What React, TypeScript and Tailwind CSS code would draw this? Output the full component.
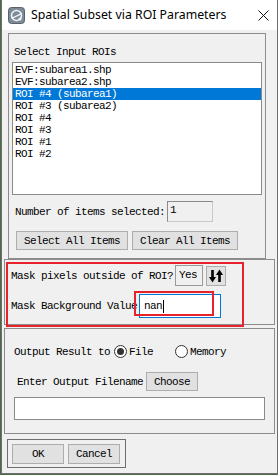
import { memo } from "react";

const mono = "font-['Liberation_Mono',monospace] text-[11px] tracking-[-0.6px] leading-[12px] text-black";
const btn = "flex items-center justify-center bg-[#e1e1e1] border border-[#adadad] " + mono;

const rois = [
  "EVF:subarea1.shp",
  "EVF:subarea2.shp",
  "ROI #4 (subarea1)",
  "ROI #3 (subarea2)",
  "ROI #4",
  "ROI #3",
  "ROI #1",
  "ROI #2",
];

const AppIcon = () => (
  <svg width="17" height="17" viewBox="0 0 17 17">
    <rect x="0.5" y="0.5" width="16" height="16" rx="3" fill="#7d8b99" stroke="#56626e" />
    <circle cx="8.5" cy="8.5" r="5" fill="none" stroke="#eef2f5" strokeWidth="1.6" />
    <path d="M4 11.5 C7 9 11 9 13.5 6" fill="none" stroke="#eef2f5" strokeWidth="1.3" />
    <circle cx="12" cy="12" r="1.6" fill="#eef2f5" />
  </svg>
);

const SwapIcon = () => (
  <svg width="14" height="14" viewBox="0 0 14 14">
    <rect x="2.2" y="1" width="2.6" height="8" fill="#000" />
    <polygon points="0,8 7,8 3.5,13.5" fill="#000" />
    <polygon points="7,6 14,6 10.5,0.5" fill="#000" />
    <rect x="9.2" y="5" width="2.6" height="8" fill="#000" />
  </svg>
);

const Radio = ({ on }: { on?: boolean }) => (
  <span className="w-[13px] h-[13px] rounded-full border border-[#333] bg-white flex items-center justify-center">
    {on && <span className="w-[7px] h-[7px] rounded-full bg-[#333]" />}
  </span>
);

export default memo(function App() {
  return (
    <div className="relative w-[278px] h-[475px] bg-[#4f6b45] overflow-hidden">
      <div className="ml-px w-[277px] h-[474px] bg-[#f0f0f0] border-x border-b border-[#6e6e6e] flex flex-col">
        {/* title bar */}
        <div className="h-[30px] bg-white flex items-center shrink-0">
          <div className="ml-[6px]"><AppIcon /></div>
          <span className="ml-[6px] font-['Noto_Sans',sans-serif] text-[12.3px] text-black">Spatial Subset via ROI Parameters</span>
          <svg className="ml-auto mr-[8px]" width="11" height="11" viewBox="0 0 11 11">
            <path d="M0.5 0.5 L10.5 10.5 M10.5 0.5 L0.5 10.5" stroke="#111" strokeWidth="1" />
          </svg>
        </div>

        {/* ROI selection group */}
        <div className="mt-[3px] ml-[6px] w-[258px] h-[226px] border border-[#8c8c8c] flex flex-col">
          <div className={mono + " pl-[5px] mt-[12px]"}>Select Input ROIs</div>
          <div className="ml-[3px] mt-[4px] w-[250px] h-[133px] bg-white border border-[#8a8a8a] pt-px">
            {rois.map((r, i) => (
              <div
                key={i}
                className={
                  mono +
                  " h-[12px] pl-[2px] whitespace-pre " +
                  (i === 2 ? "bg-[#0078d7] text-white" : "")
                }
              >
                {r}
              </div>
            ))}
          </div>
          <div className="flex items-center mt-[6px] ml-[6px]">
            <span className={mono}>Number of items selected:</span>
            <div className={mono + " ml-[2px] w-[46px] h-[21px] border border-[#8a8a8a] border-r-[#c8c8c8] border-b-[#c8c8c8] pl-[2px] pt-[2px]"}>1</div>
          </div>
          <div className="flex mt-[9px] ml-[7px] gap-[4px]">
            <div className={btn + " w-[112px] h-[19px]"}>Select All Items</div>
            <div className={btn + " w-[106px] h-[19px]"}>Clear All Items</div>
          </div>
        </div>

        {/* mask group */}
        <div className="ml-[2px] w-[271px] h-[66px] border border-[#8c8c8c] flex flex-col">
          <div className="flex items-center mt-[5px] ml-[6px]">
            <span className={mono}>Mask pixels outside of ROI?</span>
            <div className={mono + " ml-[2px] w-[28px] h-[21px] border border-[#9a9a9a] pl-[3px] pt-[3px]"}>Yes</div>
            <div className="ml-[3px] w-[20px] h-[20px] bg-[#e1e1e1] border border-[#adadad] flex items-center justify-center">
              <SwapIcon />
            </div>
          </div>
          <div className="flex items-center mt-[8px] ml-[6px]">
            <span className={mono + " w-[128px] overflow-hidden whitespace-nowrap"}>Mask Background Value</span>
            <div className={mono + " w-[82px] h-[24px] bg-white border border-[#0078d7] pl-[4px] flex items-center"}>
              nan<span className="ml-[1px] w-px h-[13px] bg-black" />
            </div>
          </div>
        </div>

        {/* output group */}
        <div className="mt-[3px] ml-[2px] w-[271px] h-[106px] border border-[#8c8c8c] flex flex-col">
          <div className="flex items-center mt-[16px] ml-[9px]">
            <span className={mono}>Output Result to</span>
            <span className="ml-[4px]"><Radio on /></span>
            <span className={mono + " ml-[2px]"}>File</span>
            <span className="ml-[22px]"><Radio /></span>
            <span className={mono + " ml-[2px]"}>Memory</span>
          </div>
          <div className="flex items-center mt-[14px] ml-[12px]">
            <span className={mono}>Enter Output Filename</span>
            <div className={btn + " ml-[3px] w-[52px] h-[19px]"}>Choose</div>
          </div>
          <div className="mt-[6px] ml-[9px] w-[251px] h-[23px] bg-white border border-[#8a8a8a]" />
        </div>

        {/* ok / cancel */}
        <div className="mt-[5px] ml-[5px] w-[119px] h-[29px] border border-[#6e6e6e] flex items-center pl-[4px] gap-[4px]">
          <div className={btn + " w-[52px] h-[20px]"}>OK</div>
          <div className={btn + " w-[52px] h-[20px]"}>Cancel</div>
        </div>
      </div>

      {/* red annotation boxes */}
      <div className="absolute left-[6px] top-[262px] w-[238px] h-[65px] border-2 border-[#e8222b]" />
      <div className="absolute left-[134px] top-[291px] w-[80px] h-[25px] border-2 border-[#e8222b]" />
    </div>
  );
});
